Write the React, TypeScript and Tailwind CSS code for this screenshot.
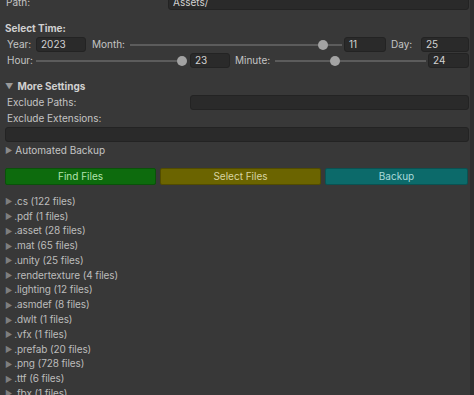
import React from 'react'

const font = { fontFamily: 'Inter, "Noto Sans", sans-serif' }

function Field({ value, className }: { value?: string; className: string }) {
  return (
    <div
      className={`h-[15px] shrink-0 rounded-[3px] border border-[#232323] bg-[#2a2a2a] pl-[4px] text-[10px] leading-[13px] text-[#d2d2d2] ${className}`}
    >
      {value}
    </div>
  )
}

function Slider({ pos, className }: { pos: number; className: string }) {
  return (
    <div className={`relative h-[15px] shrink-0 ${className}`}>
      <div className="absolute left-0 right-0 top-[7px] h-[2px] bg-[#5c5c5c]" />
      <div
        className="absolute top-[3px] h-[10px] w-[10px] rounded-full bg-[#a3a3a3]"
        style={{ left: `calc(${pos}% - 5px)` }}
      />
    </div>
  )
}

const files = [
  '.cs (122 files)',
  '.pdf (1 files)',
  '.asset (28 files)',
  '.mat (65 files)',
  '.unity (25 files)',
  '.rendertexture (4 files)',
  '.lighting (12 files)',
  '.asmdef (8 files)',
  '.dwlt (1 files)',
  '.vfx (1 files)',
  '.prefab (20 files)',
  '.png (728 files)',
  '.ttf (6 files)',
  '.fbx (1 files)',
]

export default function App() {
  return (
    <div className="flex h-[395px] w-[474px] items-start overflow-hidden bg-[#383838] text-[10px] text-[#c4c4c4]" style={font}>
      <div className="flex w-[470px] shrink-0 flex-col">
        {/* Path */}
        <div className="-mt-[6px] flex h-[16px] shrink-0 items-center pl-[6px]">
          <span className="w-[162px]">Path:</span>
          <Field value="Assets/" className="w-[301px]" />
        </div>

        {/* Select Time */}
        <div className="mt-[10px] flex h-[16px] shrink-0 items-center pl-[5px] font-bold text-[#d0d0d0]">Select Time:</div>
        <div className="flex h-[16px] shrink-0 items-center pl-[7px]">
          <span className="w-[29px]">Year:</span>
          <Field value="2023" className="w-[50px]" />
          <span className="ml-[6px] w-[38px]">Month:</span>
          <Slider pos={91} className="w-[212px]" />
          <Field value="11" className="ml-[2px] w-[42px]" />
          <span className="ml-[5px] w-[30px]">Day:</span>
          <Field value="25" className="w-[48px]" />
        </div>
        <div className="flex h-[16px] shrink-0 items-center pl-[7px]">
          <span className="w-[29px]">Hour:</span>
          <Slider pos={97} className="w-[150px]" />
          <Field value="23" className="ml-[4px] w-[40px]" />
          <span className="ml-[5px] w-[40px]">Minute:</span>
          <Slider pos={40} className="w-[151px]" />
          <Field value="24" className="ml-[2px] w-[41px]" />
        </div>

        {/* More Settings */}
        <div className="mt-[10px] flex h-[16px] shrink-0 items-center pl-[5px] font-bold text-[#d0d0d0]">
          <span className="mr-[4px] text-[8px] text-[#9a9a9a]">▼</span>More Settings
        </div>
        <div className="flex h-[16px] shrink-0 items-center pl-[7px]">
          <span className="w-[183px]">Exclude Paths:</span>
          <Field className="w-[279px]" />
        </div>
        <div className="flex h-[16px] shrink-0 items-center pl-[7px]">Exclude Extensions:</div>
        <div className="flex h-[16px] shrink-0 items-center pl-[5px]">
          <Field className="w-[464px]" />
        </div>
        <div className="flex h-[16px] shrink-0 items-center pl-[5px]">
          <span className="mr-[3px] text-[8px] text-[#8a8a8a]">▶</span>Automated Backup
        </div>

        {/* Buttons */}
        <div className="mt-[10px] flex h-[17px] shrink-0 gap-[4px] pl-[5px]">
          <button className="w-[151px] rounded-[2px] border border-[#0a520a] bg-[#0d6b0d] text-[10px] text-[#b4e4ae]">
            Find Files
          </button>
          <button className="w-[161px] rounded-[2px] border border-[#524c00] bg-[#6b6400] text-[10px] text-[#d8d4a2]">
            Select Files
          </button>
          <button className="w-[143px] rounded-[2px] border border-[#0a5252] bg-[#0c6a6a] text-[10px] text-[#aadada]">
            Backup
          </button>
        </div>

        {/* File list */}
        <div className="mt-[9px] flex shrink-0 flex-col pl-[5px] text-[#bcbcbc]">
          {files.map((f) => (
            <div key={f} className="flex h-[14.77px] shrink-0 items-center tracking-[-0.1px]">
              <span className="mr-[2px] text-[8px] text-[#7e7e7e]">▶</span>
              {f}
            </div>
          ))}
        </div>
      </div>
      <div className="h-full w-[4px] bg-[#2e2e2e]" />
    </div>
  )
}
